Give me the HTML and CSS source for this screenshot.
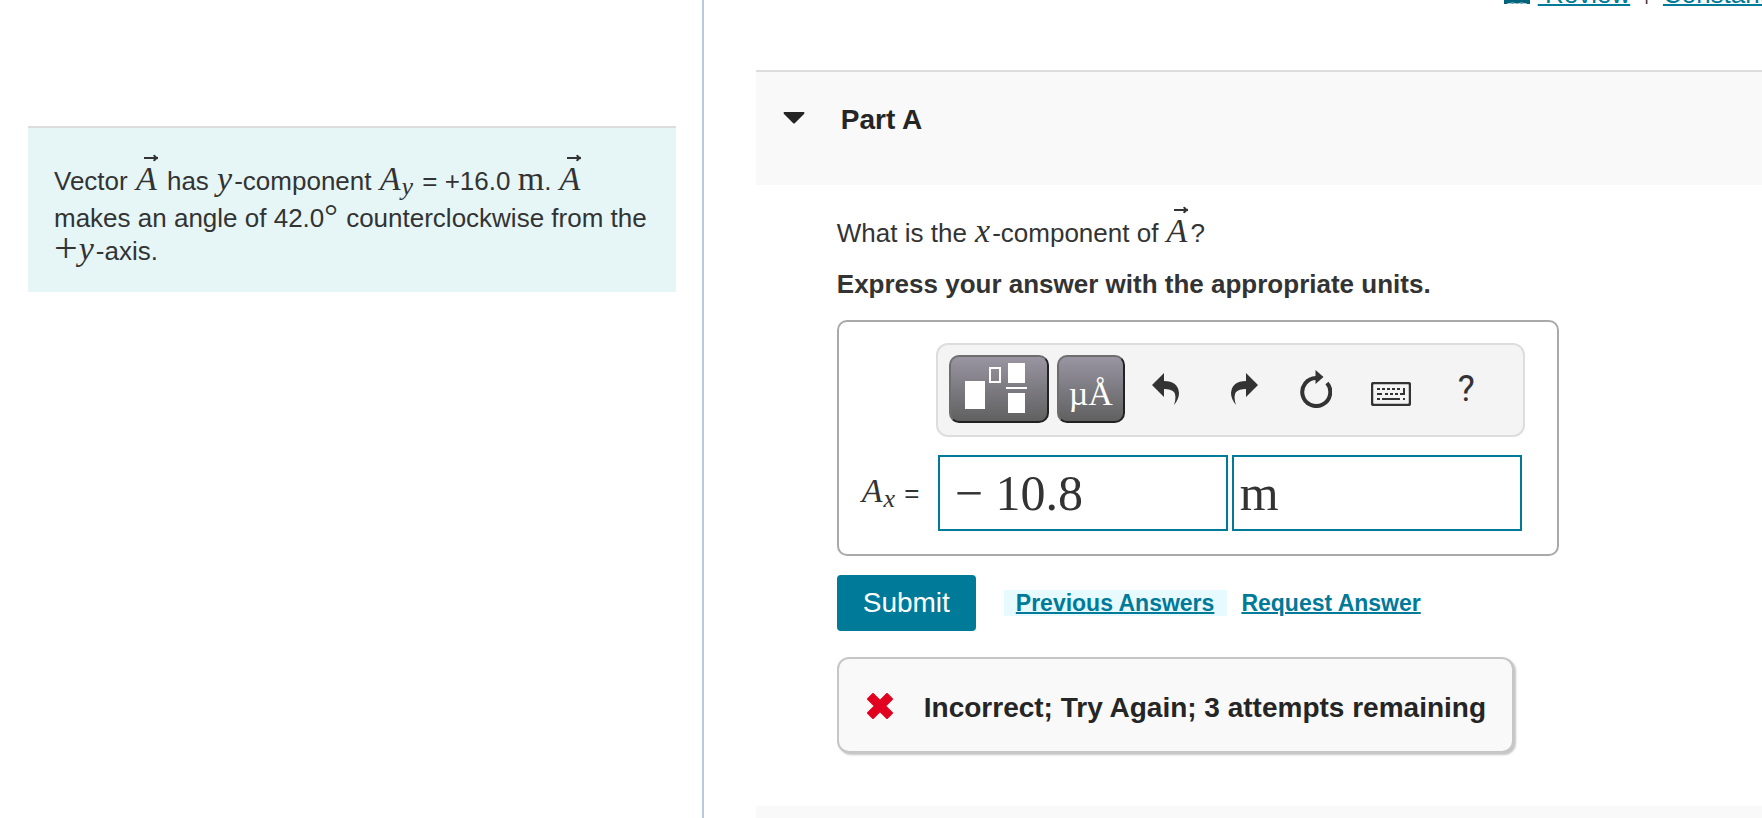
FILE: index.html
```
<!DOCTYPE html>
<html lang="en">
<head>
    <title>Vector Components</title>
    <meta charset="UTF-8">
    <meta name="viewport" content="width=device-width, initial-scale=1">
    <link rel="stylesheet" href="styles.css">
</head>
<body>

<div class="page">
    <aside class="intro">
        <div class="problem">
            Vector <span class="math vec">A<svg class="arrow" viewBox="0 0 15 8"><path d="M0 4h13M10 1q1 3 4 3q-3 0-4 3"/></svg></span>
            has <span class="math">y</span>-component <span class="math">A<span class="sub">y</span></span> = +16.0 <span class="unit">m</span>.
            <span class="math vec">A<svg class="arrow" viewBox="0 0 15 8"><path d="M0 4h13M10 1q1 3 4 3q-3 0-4 3"/></svg></span>
            makes an angle of 42.0<span class="degree">°</span> counterclockwise from the <span class="nowrap"><span class="plus">+</span><span class="math">y</span>-axis.</span>
        </div>
    </aside>

    <main class="content">
        <div class="resources">
            <svg class="book" viewBox="0 0 26 20"><path d="M0 0h26v20H0z" fill="#00647d"/><path d="M3 20q6-2 10 0q4-2 10 0" fill="none" stroke="#cfe3e8"/></svg>
            <a href="#review">&nbsp;Review</a>
            <span class="divider">|</span>
            <a href="#constants">Constants</a>
        </div>

        <section class="part">
            <header class="part-header">
                <svg class="caret" viewBox="0 0 22 12"><path d="M1 0h20q1 1 0 2l-9 9q-1 1-2 0l-9-9q-1-1 0-2z"/></svg>
                <h2>Part A</h2>
            </header>

            <div class="part-body">
                <p class="question">What is the <span class="math">x</span>-component of <span class="math vec">A<svg class="arrow" viewBox="0 0 15 8"><path d="M0 4h13M10 1q1 3 4 3q-3 0-4 3"/></svg></span>?</p>
                <p class="instructions">Express your answer with the appropriate units.</p>

                <form class="answer" id="answer">
                    <div class="toolbar">
                        <button type="button" class="key templates" aria-label="Templates">
                            <svg width="68" height="52" viewBox="0 0 68 52"><path d="M0 18h20v28H0zM43 0h17v20H43zM43 30h17v20H43zM41 24h21v2H41z" fill="#fff"/><path d="M25 5h10v14H25z" fill="none" stroke="#fff" stroke-width="2"/></svg>
                        </button>
                        <button type="button" class="key symbols" aria-label="Symbols">µÅ</button>
                        <button type="button" class="tool" aria-label="Undo">
                            <svg width="28" height="32" viewBox="0 0 28 32"><path d="M0 12L12 0v8q14 0 15 12q0 6-5 12q3-9 0-13q-3-3-10-3v8z"/></svg>
                        </button>
                        <button type="button" class="tool" aria-label="Redo">
                            <svg width="34" height="32" viewBox="-6 0 34 32"><path d="M28 12L16 0v8q-14 0-15 12q0 6 5 12q-3-9 0-13q3-3 10-3v8z"/></svg>
                        </button>
                        <button type="button" class="tool" aria-label="Reset">
                            <svg width="32" height="38" viewBox="0 0 32 38"><path d="M16 8A14 14 0 1 0 27 13" fill="none" stroke="#333" stroke-width="4"/><path d="M15.500 0l8 7-8 7z"/></svg>
                        </button>
                        <button type="button" class="tool keyboard" aria-label="Keyboard">
                            <svg width="40" height="24" viewBox="0 0 40 24"><rect x="1" y="1" width="38" height="22" rx="2" fill="none" stroke="#333" stroke-width="2.500"/><path d="M6 6h3v2H6zM11 6h3v2h-3zM16 6h3v2h-3zM21 6h3v2h-3zM26 6h3v2h-3zM32 6h2v7h-5v-2h3zM6 11h5v2H6zM14 11h3v2h-3zM19 11h3v2h-3zM24 11h3v2h-3zM6 16h3v2H6zM11 16h18v2H11zM32 16h2v2h-2z"/></svg>
                        </button>
                        <button type="button" class="tool help" aria-label="Help">?</button>
                    </div>
                    <div class="fields">
                        <label for="value"><span class="math">A<span class="sub">x</span></span> =</label>
                        <input type="text" id="value" class="value" value="− 10.8">
                        <input type="text" id="units" class="units" value="m" aria-label="Units">
                    </div>
                </form>

                <div class="actions">
                    <button type="submit" form="answer" class="submit">Submit</button>
                    <a href="#previous" class="previous">Previous Answers</a>
                    <a href="#request">Request Answer</a>
                </div>

                <div class="feedback">
                    <svg class="cross" viewBox="0 0 26 26"><path d="M6 1l7 7 7-7 5 5-7 7 7 7-5 5-7-7-7 7-5-5 7-7-7-7z"/></svg>
                    Incorrect; Try Again; 3 attempts remaining
                </div>
            </div>
        </section>

        <section class="next-part"></section>
    </main>
</div>

</body>
</html>
```
FILE: styles.css
```
* {
  box-sizing: border-box;
}

body {
  margin: 0;
  font-family: "Liberation Sans", Arial, Helvetica, sans-serif;
  font-size: 26px;
  line-height: 32px;
  color: #333;
  background: #fff;
}

a {
  color: #007a99;
  text-decoration-thickness: 2px;
}

.page {
  display: flex;
  min-height: 100vh;
}

/* Left side */
.intro {
  flex: 0 0 calc(40% - 1px);
  padding: 126px 26px 0 28px;
  border-right: 2px solid #b9cbdb;
}

.problem {
  padding: 37px 26px 25px;
  border-top: 2px solid #ddd;
  background: #e6f6f7;
}

/* Math */
.math {
  margin: 0 2px 0 1px;
  font-family: "Liberation Serif", "Times New Roman", serif;
  font-style: italic;
  font-size: 34px;
  line-height: 0;
}

.unit,
.plus {
  font-family: "Liberation Serif", "Times New Roman", serif;
  font-size: 34px;
  line-height: 0;
}

.plus {
  font-size: 42px;
  vertical-align: -2px;
}

.vec {
  position: relative;
  margin-right: 3px;
}

.arrow {
  position: absolute;
  right: -2px;
  top: -6px;
  width: 15px;
  height: 8px;
  fill: none;
  stroke: #333;
  stroke-width: 2;
}

.sub {
  margin-left: 1px;
  font-size: 26px;
  vertical-align: -5px;
}

.degree {
  margin-right: 1px;
  font-family: "Liberation Serif", "Times New Roman", serif;
  font-size: 34px;
  line-height: 38px;
}

.nowrap {
  white-space: nowrap;
}

/* Right side */
.content {
  flex: 1;
  display: flex;
  flex-direction: column;
  min-width: 0;
  padding-left: 52px;
  overflow: hidden;
}

.resources {
  display: flex;
  align-items: flex-end;
  justify-content: flex-end;
  height: 10px;
  margin: 0 -18px 60px 0;
  overflow: hidden;
  white-space: nowrap;
}

.book {
  width: 26px;
  height: 20px;
  margin: 0 8px 6px 0;
}

.divider {
  margin: 0 14px;
  font-size: 18px;
}

.part-header {
  display: flex;
  align-items: flex-start;
  padding: 32px 27px 49px;
  border-top: 2px solid #ddd;
  background: #f9f9f9;
  color: #252525;
}

.part-header h2 {
  margin: 0;
  font-size: 28px;
}

.caret {
  width: 22px;
  height: 12px;
  margin: 8px 36px 0 0;
  fill: #252525;
}

.part-body {
  padding: 32px 28px 53px 81px;
}

.question {
  margin: 0 0 19px;
}

.instructions {
  margin: 0 0 20px;
  font-weight: bold;
}

.answer {
  width: 722px;
  max-width: 100%;
  padding: 21px 32px 23px 22px;
  border: 2px solid #a9a9a9;
  border-radius: 10px;
}

.toolbar {
  display: flex;
  align-items: center;
  margin-left: 75px;
  padding: 10px 11px 12px;
  border: 2px solid #ddd;
  border-radius: 12px;
  background: #f4f4f4;
}

.key {
  height: 68px;
  padding: 0;
  border: 2px solid;
  border-color: #6e6e6e #222 #222 #6e6e6e;
  border-radius: 10px;
  background: linear-gradient(#9995a2, #606060);
  color: #fff;
}

.key svg,
.tool svg {
  display: block;
  margin: 0 auto;
}

.templates {
  width: 100px;
  margin-right: 8px;
}

.symbols {
  width: 68px;
  margin-right: 4px;
  padding-top: 10px;
  font-family: "Liberation Serif", "Times New Roman", serif;
  font-size: 34px;
}

.tool {
  width: 75px;
  height: 68px;
  padding: 0;
  border: 0;
  background: none;
  color: #333;
  fill: #333;
}

.keyboard {
  padding-top: 10px;
}

.help {
  font-family: Roboto, Arial, sans-serif;
  font-size: 36px;
}

.fields {
  display: flex;
  align-items: center;
  gap: 4px;
  margin-top: 18px;
}

.fields label {
  flex: 0 0 73px;
}

.fields input {
  flex: 0 1 290px;
  min-width: 0;
  height: 76px;
  border: 2px solid #007a99;
  border-radius: 0;
  background: #fff;
  color: #333;
  font-family: "Liberation Serif", "Times New Roman", serif;
  font-size: 50px;
}

.value {
  padding: 0 15px;
}

.units {
  padding: 0 6px;
}

.actions {
  display: flex;
  align-items: center;
  gap: 14px;
  margin: 19px 0 26px;
  font-size: 23px;
  font-weight: bold;
}

.submit {
  width: 139px;
  height: 56px;
  margin-right: 14px;
  padding: 0;
  border: 0;
  border-radius: 4px;
  background: #007a99;
  color: #fff;
  font-family: inherit;
  font-size: 28px;
}

.previous {
  padding: 0 13px 0 12px;
  background: #e6faff;
  line-height: 26px;
}

.feedback {
  display: flex;
  align-items: center;
  width: fit-content;
  height: 96px;
  padding: 6px 26px 0 28px;
  border: 2px solid #c6c6c6;
  border-radius: 12px;
  background: #f9f9f9;
  box-shadow: 2px 2px 2px #c6c6c6;
  color: #252525;
  font-size: 28px;
  font-weight: bold;
}

.cross {
  width: 26px;
  height: 26px;
  margin: 0 31px 4px 0;
  fill: #e1001f;
  stroke: #e1001f;
  stroke-width: 2;
  stroke-linejoin: round;
}

.next-part {
  flex: 1;
  background: #f9f9f9;
}
```
